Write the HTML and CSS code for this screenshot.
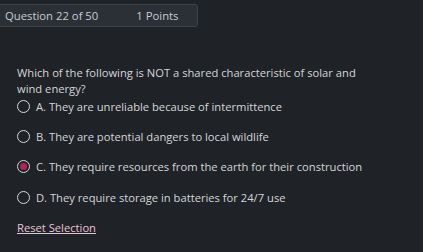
FILE: index.html
```html
<!DOCTYPE html>
<html>
<head>
<meta charset="utf-8">
<link rel="stylesheet" href="styles.css">
</head>
<body>
<div class="page">
  <div class="header">
    <span class="qnum">Question 22 of 50</span>
    <span class="points">1 Points</span>
  </div>
  <div class="question">Which of the following is NOT a shared characteristic of solar and wind energy?</div>
  <div class="options">
    <label class="option"><span class="radio"></span><span>A. They are unreliable because of intermittence</span></label>
    <label class="option"><span class="radio"></span><span>B. They are potential dangers to local wildlife</span></label>
    <label class="option"><span class="radio checked"></span><span>C. They require resources from the earth for their construction</span></label>
    <label class="option"><span class="radio"></span><span>D. They require storage in batteries for 24/7 use</span></label>
  </div>
  <a class="reset">Reset Selection</a>
</div>
</body>
</html>
```
FILE: styles.css
```css
html, body {
  margin: 0;
  padding: 0;
  background: #1f2226;
}
.page {
  width: 423px;
  height: 252px;
  font-family: "Open Sans", sans-serif;
  color: #d4d6d9;
  font-size: 11.2px;
  display: flex;
  flex-direction: column;
  padding-left: 17px;
  box-sizing: border-box;
}
.header {
  margin-top: 4px;
  margin-left: -20px;
  width: 201px;
  height: 23px;
  box-sizing: border-box;
  background: #2b2f36;
  border: 1px solid #3e424a;
  border-radius: 3px;
  display: flex;
  align-items: center;
  padding-left: 7px;
  color: #c9ccd1;
  font-size: 11.3px;
}
.points {
  margin-left: 38px;
}
.question {
  margin-top: 38px;
  width: 360px;
  line-height: 16px;
}
.options {
  display: flex;
  flex-direction: column;
  margin-top: -6px;
}
.option {
  display: flex;
  align-items: center;
  height: 30.4px;
  gap: 6px;
}
.radio {
  width: 13px;
  height: 13px;
  box-sizing: border-box;
  border: 1.5px solid #d8dadd;
  border-radius: 50%;
  flex: none;
  position: relative;
}
.radio.checked::after {
  content: "";
  position: absolute;
  left: 1.5px;
  top: 1.5px;
  width: 7px;
  height: 7px;
  border-radius: 50%;
  background: #b0245a;
}
.reset {
  margin-top: 7px;
  line-height: 16px;
  color: #e6c6d6;
  text-decoration: underline;
  align-self: flex-start;
}
```
